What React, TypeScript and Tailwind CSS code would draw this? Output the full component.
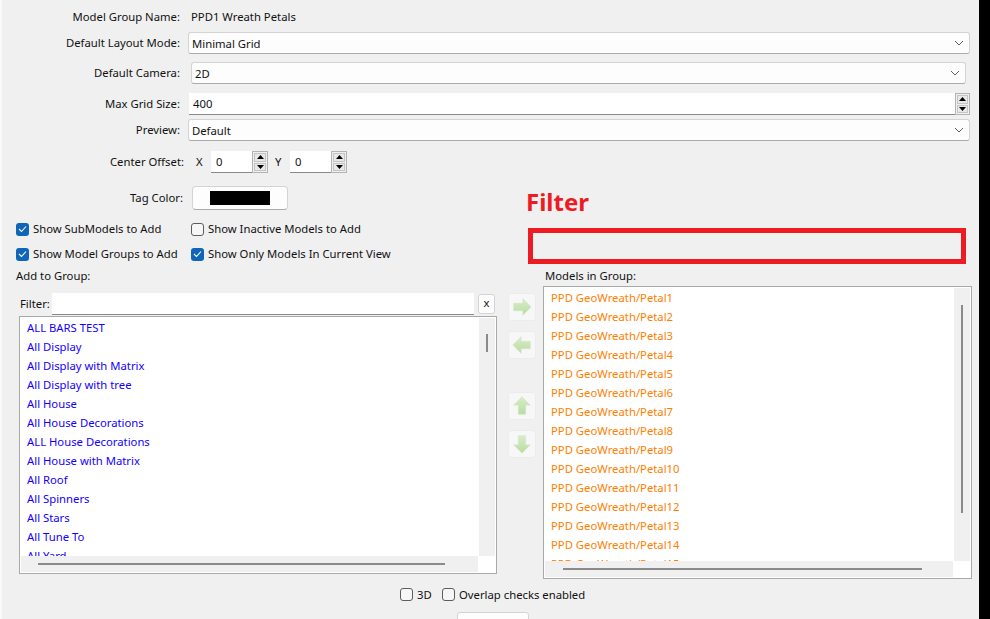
import * as React from "react";

const addItems = [
  "ALL BARS TEST",
  "All Display",
  "All Display with Matrix",
  "All Display with tree",
  "All House",
  "All House Decorations",
  "ALL House Decorations",
  "All House with Matrix",
  "All Roof",
  "All Spinners",
  "All Stars",
  "All Tune To",
  "All Yard",
];

const groupItems = Array.from({length: 15}, (_, i) => `PPD GeoWreath/Petal${i + 1}`);

const Chevron = () => (
  <svg width="10" height="6" viewBox="0 0 10 6" className="shrink-0">
    <path d="M1 1 L5 5 L9 1" fill="none" stroke="#606060" strokeWidth="1" />
  </svg>
);

const Label = ({children, width = "w-[178px]"}: {children: React.ReactNode; width?: string}) => (
  <div className={`${width} shrink-0 text-right`}>{children}</div>
);

const Select = ({value, className}: {value: string; className: string}) => (
  <div className={`flex h-[22px] items-center justify-between rounded-[3px] border border-[#d4d4d4] border-b-[#ababab] bg-[#fdfdfd] pl-[3px] pr-[5px] ${className}`}>
    <span className="pt-[1px]">{value}</span>
    <Chevron />
  </div>
);

const SpinButtons = ({className}: {className: string}) => (
  <div className={`flex shrink-0 flex-col gap-[1px] border border-[#b4b4b4] bg-[#f0f0f0] p-[1px] ${className}`}>
    <div className="flex flex-1 items-center justify-center border border-[#c4c4c4] bg-[#e8e8e8]">
      <svg width="7" height="4" viewBox="0 0 7 4"><path d="M3.5 0 L7 4 L0 4 Z" fill="#000" /></svg>
    </div>
    <div className="flex flex-1 items-center justify-center border border-[#c4c4c4] bg-[#e8e8e8]">
      <svg width="7" height="4" viewBox="0 0 7 4"><path d="M0 0 L7 0 L3.5 4 Z" fill="#000" /></svg>
    </div>
  </div>
);

const SpinInput = ({value}: {value: string}) => (
  <div className="flex h-[22px] items-stretch">
    <div className="flex w-[41px] items-center border-b border-b-[#8a8a8a] bg-white pl-[5px]">{value}</div>
    <SpinButtons className="w-[16px]" />
  </div>
);

const Check = ({label, checked = false, className = ""}: {label: string; checked?: boolean; className?: string}) => (
  <div className={`flex items-center gap-[4px] ${className}`}>
    {checked ? (
      <div className="flex h-[13px] w-[13px] shrink-0 items-center justify-center rounded-[3px] bg-[#0f65b8]">
        <svg width="9" height="8" viewBox="0 0 9 8"><path d="M1 4 L3.5 6.5 L8 1.5" fill="none" stroke="#fff" strokeWidth="1.1" /></svg>
      </div>
    ) : (
      <div className="h-[13px] w-[13px] shrink-0 rounded-[3px] border border-[#5c5c5c] bg-[#f6f6f6]" />
    )}
    <span>{label}</span>
  </div>
);

const arrowPaths = {
  right: "M3 8 H13 V3 L22 12 L13 21 V16 H3 Z",
  left: "M21 8 H11 V3 L2 12 L11 21 V16 H21 Z",
  up: "M8 21 V11 H3 L12 2 L21 11 H16 V21 Z",
  down: "M8 3 V13 H3 L12 22 L21 13 H16 V3 Z",
};

const ArrowButton = ({dir}: {dir: keyof typeof arrowPaths}) => (
  <div className="flex h-[28px] w-[28px] items-center justify-center rounded-[3px] border border-[#ececec] bg-[#f7f7f7]">
    <svg width="22" height="22" viewBox="0 0 24 24">
      <defs>
        <linearGradient id={`arrow-${dir}`} x1="0" y1="0" x2="0" y2="1">
          <stop offset="0" stopColor="#d8edc8" />
          <stop offset="1" stopColor="#b9dba2" />
        </linearGradient>
      </defs>
      <path d={arrowPaths[dir]} fill={`url(#arrow-${dir})`} stroke="#d3e6c6" strokeWidth="0.8" />
    </svg>
  </div>
);

const ListBox = ({items, color, className, thumbV, thumbH}: {
  items: string[];
  color: string;
  className: string;
  thumbV: string;
  thumbH: string;
}) => (
  <div className={`flex flex-col border border-[#a9a9a9] bg-white p-[1px] ${className}`}>
    <div className="flex min-h-0 flex-1 gap-[1px]">
      <div className={`min-h-0 flex-1 overflow-hidden pl-[6px] ${color}`}>
        {items.map((item) => (
          <div key={item} className="h-[19px] leading-[19px]">{item}</div>
        ))}
      </div>
      <div className="flex w-[16px] shrink-0 justify-center bg-[#f0f0f0]">
        <div className={`w-[2px] bg-[#8a8a8a] ${thumbV}`} />
      </div>
    </div>
    <div className="flex gap-[1px]">
      <div className="flex h-[16px] flex-1 items-center bg-[#f0f0f0]">
        <div className={`h-[2px] bg-[#8a8a8a] ${thumbH}`} />
      </div>
      <div className="h-[16px] w-[16px] shrink-0 bg-white" />
    </div>
  </div>
);

export default function App() {
  return (
    <div className="flex h-[619px] w-[990px] overflow-hidden bg-black font-['Noto_Sans','Liberation_Sans',sans-serif] text-[11.3px] leading-[16px] text-[#111]">
      <div className="relative h-full w-[979px] shrink-0 border-l-[2px] border-l-[#fafafa] bg-[#f0f0f0]">
        {/* top form */}
        <div className="flex h-[32px] items-center pt-[2px]">
          <Label>Model Group Name:</Label>
          <span className="ml-[11px]">PPD1 Wreath Petals</span>
        </div>
        <div className="flex items-center">
          <Label>Default Layout Mode:</Label>
          <Select value="Minimal Grid" className="ml-[8px] w-[782px]" />
        </div>
        <div className="mt-[8px] flex items-center">
          <Label>Default Camera:</Label>
          <Select value="2D" className="ml-[11px] w-[775px]" />
        </div>
        <div className="mt-[9px] flex h-[22px] items-stretch">
          <Label width="w-[178px] self-center">Max Grid Size:</Label>
          <div className="ml-[9px] flex w-[766px] items-center border-b border-b-[#8a8a8a] bg-white pl-[4px]">400</div>
          <SpinButtons className="w-[15px]" />
        </div>
        <div className="mt-[4px] flex items-center">
          <Label>Preview:</Label>
          <Select value="Default" className="ml-[8px] w-[782px]" />
        </div>
        <div className="mt-[10px] flex h-[22px] items-center">
          <Label width="w-[182px]">Center Offset:</Label>
          <span className="ml-[12px] w-[15px]">X</span>
          <SpinInput value="0" />
          <span className="ml-[7px] w-[15px]">Y</span>
          <SpinInput value="0" />
        </div>
        <div className="mt-[13px] flex h-[24px] items-center">
          <Label width="w-[181px]">Tag Color:</Label>
          <div className="ml-[9px] flex h-[24px] w-[96px] items-center justify-center rounded-[4px] border border-[#d4d4d4] border-b-[#ababab] bg-[#fdfdfd]">
            <div className="h-[14px] w-[60px] bg-black" />
          </div>
        </div>

        {/* option checkboxes */}
        <div className="mt-[11px] flex h-[16px] items-center pl-[14px]">
          <Check label="Show SubModels to Add" checked className="w-[175px]" />
          <Check label="Show Inactive Models to Add" />
        </div>
        <div className="mt-[9px] flex h-[16px] items-center pl-[14px]">
          <Check label="Show Model Groups to Add" checked className="w-[175px]" />
          <Check label="Show Only Models In Current View" checked />
        </div>

        {/* lists */}
        <div className="mt-[2px] flex items-start">
          <div className="w-[506px] shrink-0">
            <div className="ml-[14px] mt-[4px] h-[16px]">Add to Group:</div>
            <div className="ml-[18px] mt-[9px] flex h-[22px] items-center">
              <span className="w-[32px]">Filter:</span>
              <div className="h-[22px] w-[422px] border-b border-b-[#8a8a8a] bg-white" />
              <div className="ml-[4px] flex h-[20px] w-[17px] items-center justify-center rounded-[3px] border border-[#d4d4d4] bg-[#fdfdfd] pb-[2px]">x</div>
            </div>
            <ListBox
              items={addItems}
              color="text-[#1400ff]"
              className="ml-[17px] mt-[1px] h-[258px] w-[478px]"
              thumbV="mt-[16px] h-[18px]"
              thumbH="ml-[17px] w-[407px]"
            />
          </div>
          <div className="flex w-[28px] shrink-0 flex-col pt-[29px]">
            <ArrowButton dir="right" />
            <div className="mt-[10px]"><ArrowButton dir="left" /></div>
            <div className="mt-[33px]"><ArrowButton dir="up" /></div>
            <div className="mt-[10px]"><ArrowButton dir="down" /></div>
          </div>
          <div className="ml-[7px] shrink-0">
            <div className="ml-[2px] mt-[4px] h-[16px]">Models in Group:</div>
            <ListBox
              items={groupItems}
              color="text-[#ff8000]"
              className="mt-[2px] h-[293px] w-[429px]"
              thumbV="mt-[17px] h-[208px]"
              thumbH="ml-[18px] w-[359px]"
            />
          </div>
        </div>

        {/* bottom row */}
        <div className="mt-[7px] flex h-[17px] items-center pl-[398px]">
          <Check label="3D" className="w-[42px]" />
          <Check label="Overlap checks enabled" />
        </div>
        <div className="ml-[455px] mt-[9px] h-[20px] w-[72px] rounded-[3px] border border-[#d4d4d4] bg-[#fdfdfd]" />

        {/* red annotation over the dialog */}
        <div className="absolute left-[524px] top-[184px] text-[24px] font-bold leading-[36px] text-[#ed1c24]">Filter</div>
        <div className="absolute left-[526px] top-[228px] h-[36px] w-[438px] border-[5px] border-[#ed1c24]" />
      </div>
    </div>
  );
}
